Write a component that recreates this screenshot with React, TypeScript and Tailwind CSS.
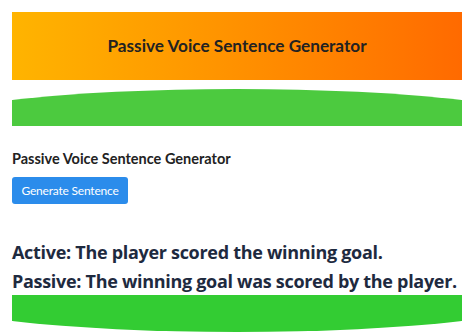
import React, { useState } from "react";

const SENTENCES = [
  {
    active: "The player scored the winning goal.",
    passive: "The winning goal was scored by the player.",
  },
  {
    active: "The chef cooked a delicious meal.",
    passive: "A delicious meal was cooked by the chef.",
  },
];

export default function App() {
  const [index, setIndex] = useState(0);
  const current = SENTENCES[index];

  return (
    <div className="min-h-screen bg-white font-['Lato','Noto_Sans',sans-serif]">
      <div className="px-3 pt-3">
        {/* Header */}
        <div className="h-[68px] flex items-center justify-center bg-gradient-to-r from-[#ffb400] to-[#ff6a00]">
          <h1 className="text-[17.2px] font-bold text-[#222]">Passive Voice Sentence Generator</h1>
        </div>

        <div className="mt-[9px] h-[37px] bg-[#4cca3f] [clip-path:ellipse(70%_100%_at_50%_100%)]" />

        <h2 className="mt-[23px] text-[14.5px] font-bold text-[#222] leading-5">
          Passive Voice Sentence Generator
        </h2>
        <button
          onClick={() => setIndex((index + 1) % SENTENCES.length)}
          className="mt-[8px] h-[27px] w-[116px] rounded-[3px] bg-[#2b8ceb] text-white text-[12px] tracking-[-0.2px] leading-none"
        >
          Generate Sentence
        </button>

        <div className="mt-[34px] font-['Open_Sans',sans-serif] font-bold text-[18px] tracking-[-0.3px] leading-[29px] text-[#1e2a3f] whitespace-nowrap">
          <p>Active: {current.active}</p>
          <p>Passive: {current.passive}</p>
        </div>

        <div className="-mt-[1px] h-[37px] bg-[#33cc33] [clip-path:ellipse(70%_100%_at_50%_0%)]" />
      </div>
    </div>
  );
}
